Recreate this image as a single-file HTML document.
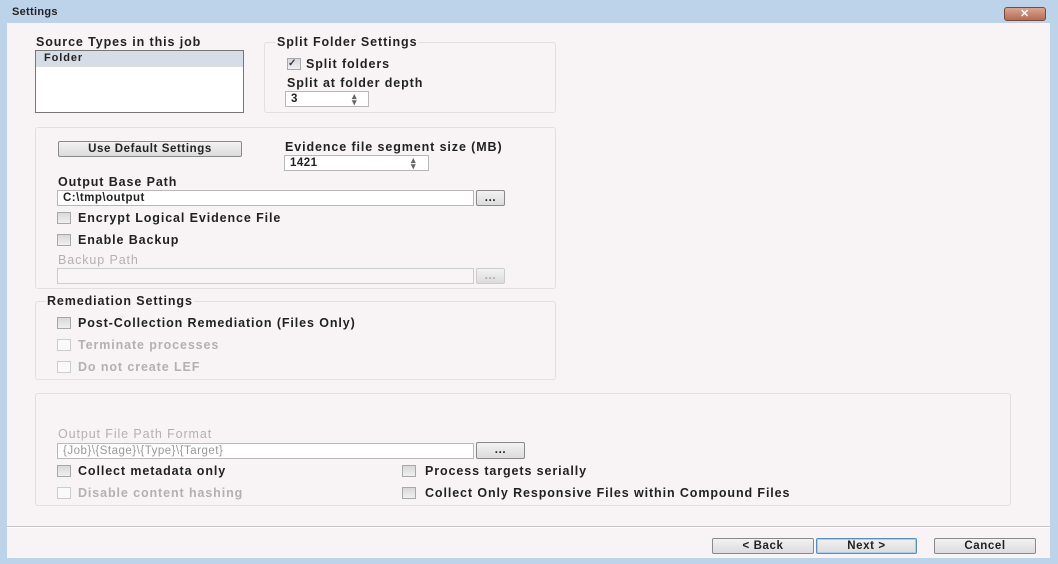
<!DOCTYPE html><html><head><style>
*{margin:0;padding:0;box-sizing:border-box}
body{width:1058px;height:564px;background:#bdd3ea;position:relative;overflow:hidden;font-family:"Liberation Sans",sans-serif;font-size:12.5px;font-weight:bold;color:#222;letter-spacing:0.9px}
.a{position:absolute;white-space:nowrap}
.g{color:#b4b0b2}
.box{position:absolute;border:1px solid #e2dfe0;border-radius:3px}
.inp{position:absolute;background:#fff;border:1px solid #b8b8b8;height:16px;font-size:11.5px;padding-left:5px;line-height:14px;letter-spacing:0.5px}
.btn{position:absolute;border:1px solid #8a8a8a;border-radius:2px;background:linear-gradient(#f2f2f2,#dcdcdc);text-align:center;line-height:15px;font-size:11.5px;height:16px;letter-spacing:0.6px}
.cb{position:absolute;width:14px;height:12px;border:1px solid #a8a8a8;background:linear-gradient(#d8d8d8,#f0f0f0)}
.cbd{background:#fafafa;border-color:#ccc}
.spin{position:absolute;font-size:9px;color:#666;line-height:6px}
</style></head><body>
<div class="a" style="left:12px;top:6px;font-size:11px;letter-spacing:0.3px">Settings</div>
<div class="a" style="left:1004px;top:7px;width:42px;height:14px;border:1px solid #7a4a3a;border-radius:3px;background:linear-gradient(#d9a590,#b86a55);color:#fff;text-align:center;font-size:11px;line-height:12px">✕</div>
<div class="a" style="left:7px;top:23px;width:1043px;height:535px;background:#f8f4f5"></div>

<div class="a" style="left:36px;top:35px">Source Types in this job</div>
<div class="a" style="left:35px;top:50px;width:209px;height:63px;border:1px solid #777;background:#fff"><div style="background:#d6dde6;height:16px;padding-left:8px;line-height:15px;font-size:11px">Folder</div></div>

<div class="box" style="left:264px;top:42px;width:292px;height:71px"></div>
<div class="a" style="left:275px;top:35px;background:#f8f4f5;padding:0 2px">Split Folder Settings</div>
<div class="cb" style="left:287px;top:58px;font-size:10px;line-height:10px;color:#335">✓</div>
<div class="a" style="left:306px;top:57px">Split folders</div>
<div class="a" style="left:287px;top:76px">Split at folder depth</div>
<div class="inp" style="left:285px;top:91px;width:84px">3</div><div class="spin a" style="left:352px;top:93px">▴<br>▾</div>

<div class="box" style="left:35px;top:127px;width:521px;height:162px"></div>
<div class="btn" style="left:58px;top:141px;width:184px">Use Default Settings</div>
<div class="a" style="left:285px;top:140px">Evidence file segment size (MB)</div>
<div class="inp" style="left:284px;top:155px;width:145px">1421</div><div class="spin a" style="left:411px;top:157px">▴<br>▾</div>
<div class="a" style="left:58px;top:175px">Output Base Path</div>
<div class="inp" style="left:57px;top:190px;width:417px">C:\tmp\output</div>
<div class="btn" style="left:476px;top:190px;width:29px">...</div>
<div class="cb" style="left:57px;top:212px"></div><div class="a" style="left:78px;top:211px">Encrypt Logical Evidence File</div>
<div class="cb" style="left:57px;top:234px"></div><div class="a" style="left:78px;top:233px">Enable Backup</div>
<div class="a g" style="left:58px;top:253px;font-weight:normal">Backup Path</div>
<div class="inp" style="left:57px;top:268px;width:417px;border-color:#ccc;background:#f7f5f5"></div>
<div class="btn" style="left:476px;top:268px;width:29px;border-color:#ccc;color:#aaa">...</div>

<div class="box" style="left:35px;top:301px;width:521px;height:79px"></div>
<div class="a" style="left:46px;top:294px;background:#f8f4f5;padding:0 1px">Remediation Settings</div>
<div class="cb" style="left:57px;top:317px"></div><div class="a" style="left:78px;top:316px">Post-Collection Remediation (Files Only)</div>
<div class="cb cbd" style="left:57px;top:339px"></div><div class="a g" style="left:78px;top:338px">Terminate processes</div>
<div class="cb cbd" style="left:57px;top:361px"></div><div class="a g" style="left:78px;top:360px">Do not create LEF</div>

<div class="box" style="left:35px;top:393px;width:976px;height:113px"></div>
<div class="a g" style="left:58px;top:427px;font-weight:normal">Output File Path Format</div>
<div class="inp" style="left:57px;top:443px;width:417px;border-color:#bbb;color:#999;font-weight:normal">{Job}\{Stage}\{Type}\{Target}</div>
<div class="btn" style="left:476px;top:442px;width:49px;height:17px">...</div>
<div class="cb" style="left:57px;top:465px"></div><div class="a" style="left:78px;top:464px">Collect metadata only</div>
<div class="cb cbd" style="left:57px;top:487px"></div><div class="a g" style="left:78px;top:486px">Disable content hashing</div>
<div class="cb" style="left:402px;top:465px"></div><div class="a" style="left:425px;top:464px">Process targets serially</div>
<div class="cb" style="left:402px;top:487px"></div><div class="a" style="left:425px;top:486px">Collect Only Responsive Files within Compound Files</div>

<div class="a" style="left:7px;top:526px;width:1043px;height:2px;border-top:1px solid #c8c4c5;border-bottom:1px solid #fff"></div>
<div class="btn" style="left:712px;top:538px;width:102px">&lt; Back</div>
<div class="btn" style="left:816px;top:538px;width:101px;border-color:#5a8fc0;box-shadow:inset 0 0 0 1px #a8cdee">Next &gt;</div>
<div class="btn" style="left:934px;top:538px;width:102px">Cancel</div>
</body></html>
